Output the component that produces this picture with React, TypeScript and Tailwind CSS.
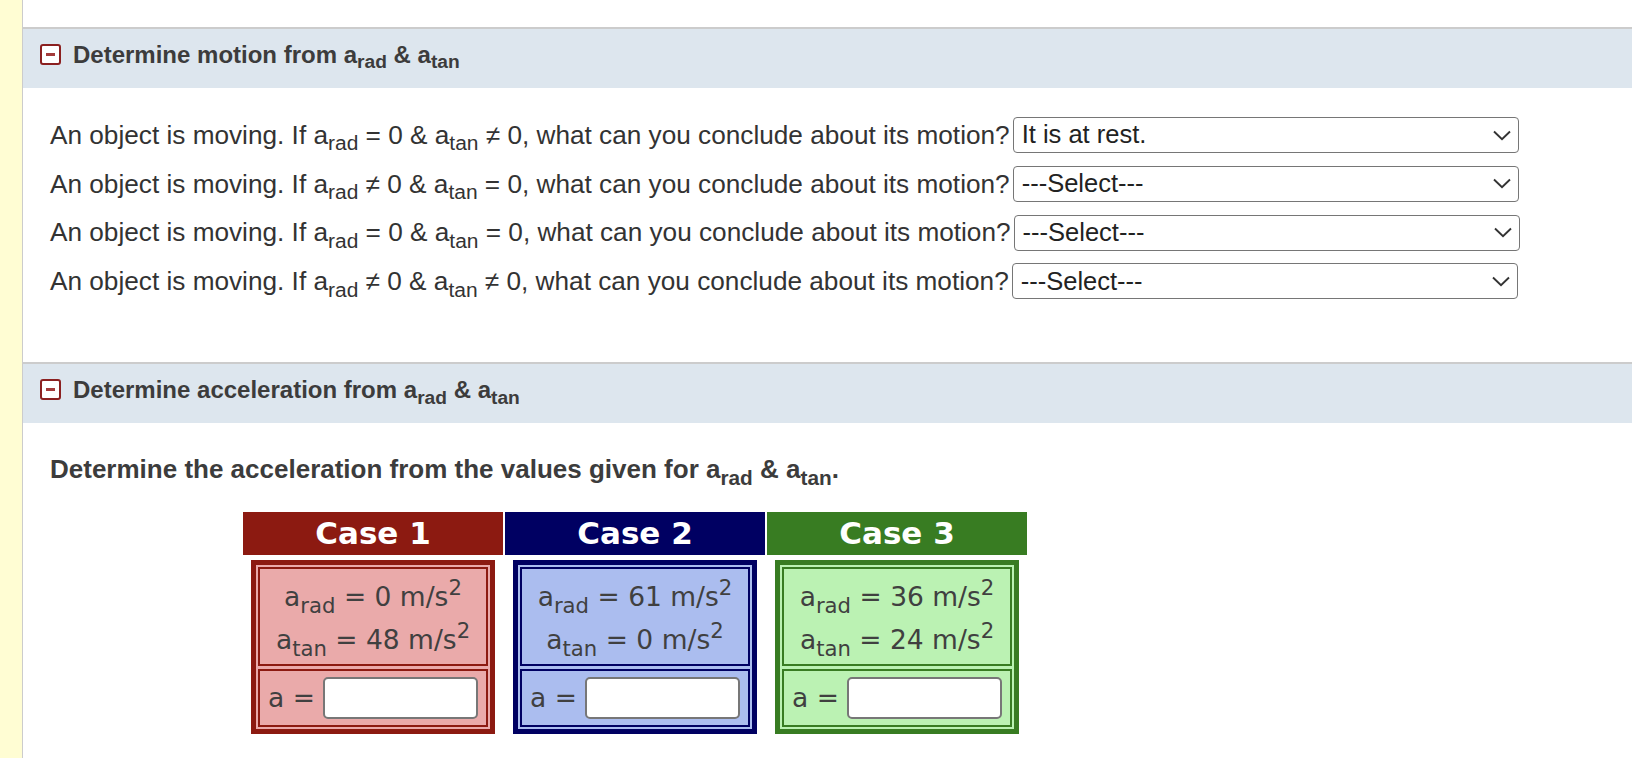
import React from "react";

const Sub = ({ children }: { children: React.ReactNode }) => (
  <sub className="text-[80%] bottom-[-0.3em]">{children}</sub>
);

const Sup = ({ children }: { children: React.ReactNode }) => (
  <sup className="text-[80%] top-[-0.55em]">{children}</sup>
);

const MinusIcon = () => (
  <div className="w-[21px] h-[21px] shrink-0 border-2 border-[#8b2020] rounded-[3px] bg-white flex items-center justify-center">
    <div className="w-[9px] h-[3px] bg-[#a33a3a]" />
  </div>
);

const SectionHeader = ({ children }: { children: React.ReactNode }) => (
  <div className="h-[61px] border-t-2 border-[#cccccc] bg-[#dde6ee] flex items-center pb-[8px] pl-[17px] gap-[12px]">
    <MinusIcon />
    <div className="text-[24px] font-bold text-[#3c3c3c] whitespace-nowrap leading-none">{children}</div>
  </div>
);

const Chevron = () => (
  <svg width="18" height="11" viewBox="0 0 18 11" className="shrink-0">
    <path d="M1 1.5 L9 9.2 L17 1.5" fill="none" stroke="#333" strokeWidth="1.9" />
  </svg>
);

const rows = [
  { r: "=", t: "≠", v: "It is at rest." },
  { r: "≠", t: "=", v: "---Select---" },
  { r: "=", t: "=", v: "---Select---" },
  { r: "≠", t: "≠", v: "---Select---" },
];

const cases = [
  {
    title: "Case 1",
    head: "bg-[#8c1a11]",
    box: "border-[#8c1a11] bg-[#eaaaaa]",
    cell: "border-[#8c1a11]",
    rad: "0",
    tan: "48",
  },
  {
    title: "Case 2",
    head: "bg-[#000062]",
    box: "border-[#000062] bg-[#abbdef]",
    cell: "border-[#000062]",
    rad: "61",
    tan: "0",
  },
  {
    title: "Case 3",
    head: "bg-[#387c22]",
    box: "border-[#387c22] bg-[#bbf2b3]",
    cell: "border-[#387c22]",
    rad: "36",
    tan: "24",
  },
];

export default function App() {
  return (
    <div className="flex min-h-[758px] bg-white font-['Liberation_Sans',Arial,sans-serif] text-[#333333]">
      <div className="w-[23px] shrink-0 bg-[#fffdd3] border-r border-[#cccccc]" />
      <div className="flex-1 min-w-0">
        <div className="h-[27px]" />
        <SectionHeader>
          Determine motion from a<Sub>rad</Sub> &amp; a<Sub>tan</Sub>
        </SectionHeader>

        <div className="pt-[29px] pl-[27px] flex flex-col gap-[12.8px]">
          {rows.map((row, i) => (
            <div key={i} className="flex items-center h-[36px]">
              <span className="text-[26.2px] whitespace-nowrap leading-none">
                An object is moving. If a<Sub>rad</Sub> {row.r} 0 &amp; a<Sub>tan</Sub> {row.t} 0, what can you
                conclude about its motion?
              </span>
              <div className="ml-[3px] w-[506px] h-[36px] shrink-0 border-[1.75px] border-[#767676] rounded-[4px] bg-white flex items-center pl-[8px] pr-[7px]">
                <span className="flex-1 text-[25.5px] text-[#222] leading-none">{row.v}</span>
                <Chevron />
              </div>
            </div>
          ))}
        </div>

        <div className="h-[63px]" />
        <SectionHeader>
          Determine acceleration from a<Sub>rad</Sub> &amp; a<Sub>tan</Sub>
        </SectionHeader>

        <div className="pl-[27px] mt-[32px] text-[26px] font-bold text-[#3c3c3c] leading-[29px] whitespace-nowrap">
          Determine the acceleration from the values given for a<Sub>rad</Sub> &amp; a<Sub>tan</Sub>.
        </div>

        <div className="ml-[220px] mt-[28px] flex gap-[2px] font-['DejaVu_Sans',Verdana,sans-serif]">
          {cases.map((c) => (
            <div key={c.title} className="w-[260px] flex flex-col items-center">
              <div className={`w-full h-[43px] flex items-center justify-center text-white font-bold text-[31px] leading-none ${c.head}`}>
                {c.title}
              </div>
              <div className={`mt-[5px] w-[244px] border-[5px] p-[2px] flex flex-col gap-[3px] ${c.box}`}>
                <div className={`h-[99px] border-2 flex flex-col items-center justify-center pt-[3px] text-[26.5px] leading-[43px] text-[#404040] ${c.cell}`}>
                  <div className="whitespace-nowrap">
                    a<Sub>rad</Sub> = {c.rad} m/s<Sup>2</Sup>
                  </div>
                  <div className="whitespace-nowrap">
                    a<Sub>tan</Sub> = {c.tan} m/s<Sup>2</Sup>
                  </div>
                </div>
                <div className={`h-[58px] border-2 flex items-center pl-[8px] pr-[8px] text-[26.5px] text-[#404040] ${c.cell}`}>
                  <span className="whitespace-nowrap leading-none">a =</span>
                  <div className="ml-auto w-[155px] h-[42px] bg-white border-2 border-[#777777] rounded-[5px]" />
                </div>
              </div>
            </div>
          ))}
        </div>
      </div>
    </div>
  );
}
